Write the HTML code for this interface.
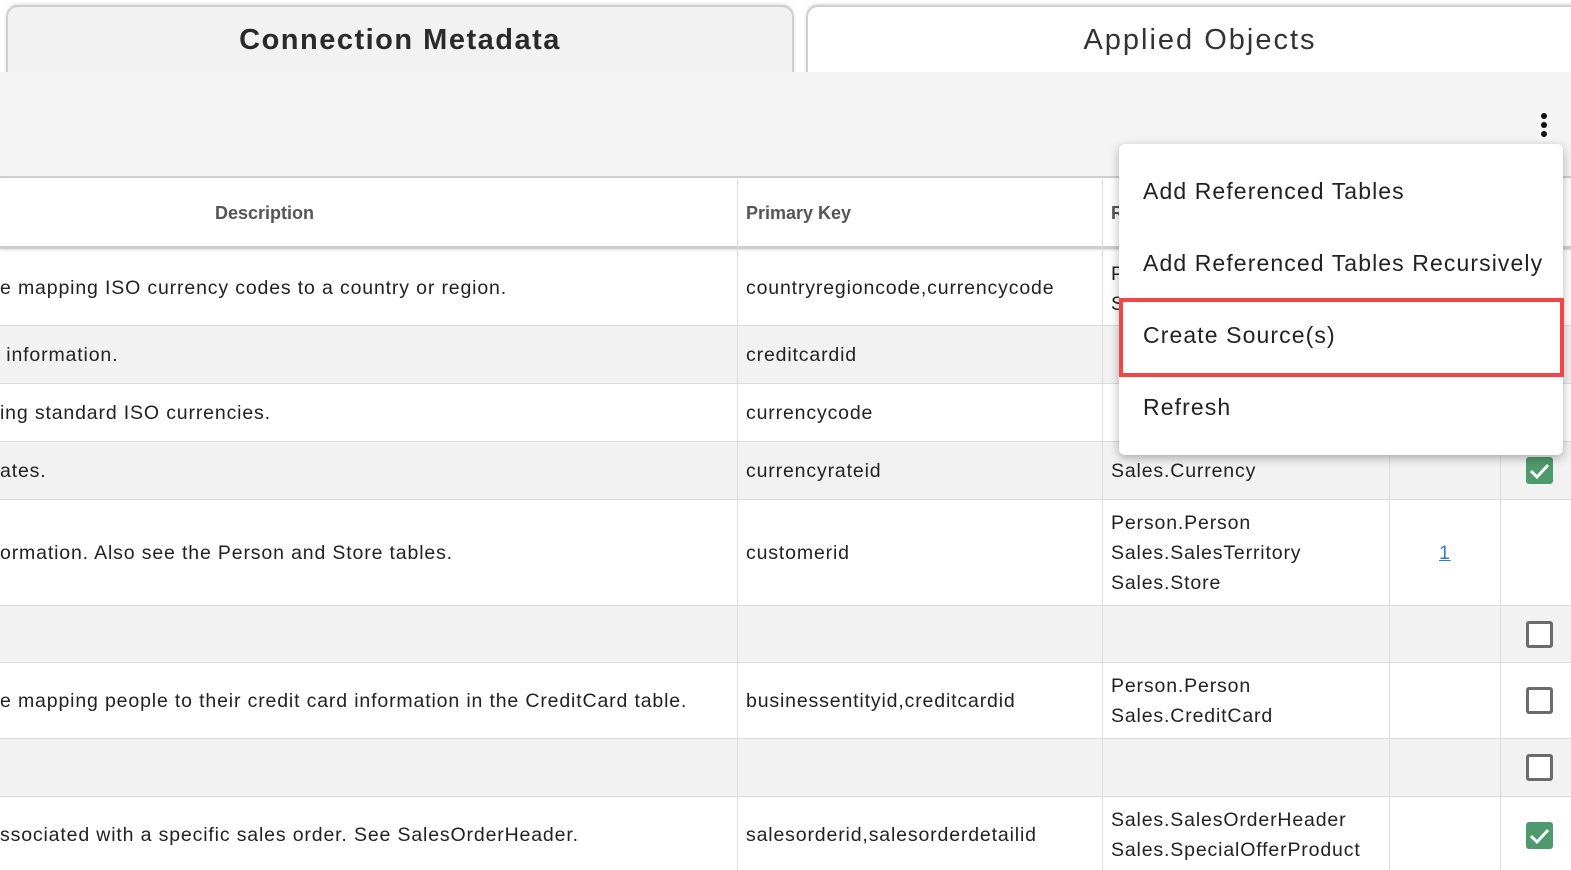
<!DOCTYPE html>
<html><head><meta charset="utf-8"><style>
*{margin:0;padding:0;box-sizing:border-box}
body{width:1571px;height:869px;overflow:hidden;background:#fff;font-family:"Liberation Sans",sans-serif;color:#222;position:relative}
.tab{position:absolute;top:5px;height:80px;border:2px solid #cfcfcf;border-bottom:none;border-radius:12px 12px 0 0;box-shadow:0 -1px 3px rgba(0,0,0,.15);text-align:center;font-size:29px;letter-spacing:2px;line-height:66px}
.t{position:absolute;font-size:19.5px;white-space:nowrap;letter-spacing:.85px}
.row{position:absolute;left:0;width:1571px;border-bottom:1px solid #dcdcdc}
.vl{position:absolute;width:1px;background:#dcdcdc}
.cb{position:absolute;left:1526px;width:27px;height:27px;border:3px solid #6b6b6b;border-radius:3px;background:#fff}
.ck{position:absolute;left:1526px;width:27px;height:27px;border-radius:3px;background:#4f9a6c}
.mi{position:absolute;left:1143px;font-size:23px;letter-spacing:1.1px;color:#222}
</style></head><body>
<div class="tab" style="left:6px;width:788px;background:#f2f2f2;font-weight:bold;color:#2a2a2a;letter-spacing:1.5px">Connection Metadata</div>
<div class="tab" style="left:806px;width:800px;background:#fff;color:#333;text-indent:-12px">Applied Objects</div>
<div style="position:absolute;top:72px;left:0;width:1571px;height:106px;background:#f4f4f4;border-bottom:2px solid #cfcfcf"></div>
<div style="position:absolute;left:1541px;top:113px;width:6px;height:6px;border-radius:50%;background:#111"></div>
<div style="position:absolute;left:1541px;top:122px;width:6px;height:6px;border-radius:50%;background:#111"></div>
<div style="position:absolute;left:1541px;top:131px;width:6px;height:6px;border-radius:50%;background:#111"></div>
<div style="position:absolute;top:179px;left:0;width:1571px;height:70px;background:#fff;border-bottom:3px solid #cfcfcf;box-shadow:0 1px 2px rgba(0,0,0,.15)"></div>
<div class="t" style="left:215px;top:203px;font-size:18px;font-weight:bold;color:#555;letter-spacing:0">Description</div>
<div class="t" style="left:746px;top:203px;font-size:18px;font-weight:bold;color:#555;letter-spacing:0">Primary Key</div>
<div class="t" style="left:1111px;top:203px;font-size:18px;font-weight:bold;color:#555">R</div>
<div class="row" style="top:251px;height:75px;background:#fff"></div>
<div class="row" style="top:326px;height:58px;background:#f2f2f2"></div>
<div class="row" style="top:384px;height:58px;background:#fff"></div>
<div class="row" style="top:442px;height:58px;background:#f2f2f2"></div>
<div class="row" style="top:500px;height:106px;background:#fff"></div>
<div class="row" style="top:606px;height:57px;background:#f2f2f2"></div>
<div class="row" style="top:663px;height:76px;background:#fff"></div>
<div class="row" style="top:739px;height:58px;background:#f2f2f2"></div>
<div class="row" style="top:797px;height:73px;background:#fff;border:none"></div>
<div class="vl" style="left:737px;top:179px;height:691px"></div>
<div class="vl" style="left:1102px;top:179px;height:691px"></div>
<div class="vl" style="left:1389px;top:251px;height:619px"></div>
<div class="vl" style="left:1500px;top:251px;height:619px"></div>
<div class="t" style="left:0;top:277px">e mapping ISO currency codes to a country or region.</div>
<div class="t" style="left:746px;top:277px">countryregioncode,currencycode</div>
<div class="t" style="left:1111px;top:263px">P</div>
<div class="t" style="left:1111px;top:293px">S</div>
<div class="t" style="left:0;top:344px">&nbsp;information.</div>
<div class="t" style="left:746px;top:344px">creditcardid</div>
<div class="t" style="left:0;top:402px">ing standard ISO currencies.</div>
<div class="t" style="left:746px;top:402px">currencycode</div>
<div class="t" style="left:0;top:460px">ates.</div>
<div class="t" style="left:746px;top:460px">currencyrateid</div>
<div class="t" style="left:1111px;top:460px">Sales.Currency</div>
<div class="ck" style="top:457px"></div>
<div class="t" style="left:0;top:542px">ormation. Also see the Person and Store tables.</div>
<div class="t" style="left:746px;top:542px">customerid</div>
<div class="t" style="left:1111px;top:512px">Person.Person</div>
<div class="t" style="left:1111px;top:542px">Sales.SalesTerritory</div>
<div class="t" style="left:1111px;top:572px">Sales.Store</div>
<div class="t" style="left:1439px;top:542px;color:#3a7bbf;text-decoration:underline">1</div>
<div class="cb" style="top:621px"></div>
<div class="t" style="left:0;top:690px">e mapping people to their credit card information in the CreditCard table.</div>
<div class="t" style="left:746px;top:690px">businessentityid,creditcardid</div>
<div class="t" style="left:1111px;top:675px">Person.Person</div>
<div class="t" style="left:1111px;top:705px">Sales.CreditCard</div>
<div class="cb" style="top:687px"></div>
<div class="cb" style="top:754px"></div>
<div class="t" style="left:0;top:824px">ssociated with a specific sales order. See SalesOrderHeader.</div>
<div class="t" style="left:746px;top:824px">salesorderid,salesorderdetailid</div>
<div class="t" style="left:1111px;top:809px">Sales.SalesOrderHeader</div>
<div class="t" style="left:1111px;top:839px">Sales.SpecialOfferProduct</div>
<div class="ck" style="top:822px"></div>
<svg style="position:absolute;left:0;top:0" width="1571" height="869">
<path d="M1531 471 l6 6 l11 -12" stroke="#fff" stroke-width="3" fill="none"/>
<path d="M1531 836 l6 6 l11 -12" stroke="#fff" stroke-width="3" fill="none"/>
</svg>
<div style="position:absolute;left:1119px;top:144px;width:444px;height:311px;background:#fff;border-radius:6px;box-shadow:0 3px 10px rgba(0,0,0,.3)"></div>
<div class="mi" style="top:178px">Add Referenced Tables</div>
<div class="mi" style="top:250px">Add Referenced Tables Recursively</div>
<div style="position:absolute;left:1119px;top:298px;width:445px;height:79px;border:4px solid #f04646"></div>
<div class="mi" style="top:322px">Create Source(s)</div>
<div class="mi" style="top:394px">Refresh</div>
</body></html>
